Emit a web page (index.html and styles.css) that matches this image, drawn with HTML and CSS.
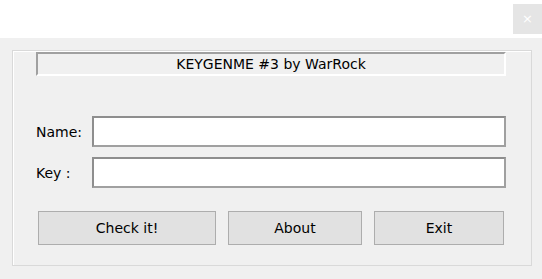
FILE: index.html
```html
<!DOCTYPE html>
<html lang="en">
<head>
    <meta charset="UTF-8">
    <title>KEYGENME #3 by WarRock</title>
    <link rel="stylesheet" href="styles.css">
</head>
<body>
    <div class="titlebar">
        <div class="close">×</div>
    </div>

    <div class="window">
        <div class="group">
            <div class="caption">KEYGENME #3 by WarRock</div>

            <div class="field">
                <span class="label">Name:</span>
                <input class="input" type="text">
            </div>
            <div class="field">
                <span class="label">Key :</span>
                <input class="input" type="text">
            </div>

            <div class="buttons">
                <button class="btn btn-check">Check it!</button>
                <button class="btn btn-about">About</button>
                <button class="btn btn-exit">Exit</button>
            </div>
        </div>
    </div>
</body>
</html>
```

FILE: styles.css
```css
* {
    margin: 0;
    padding: 0;
    box-sizing: border-box;
}

body {
    width: 542px;
    height: 279px;
    background: #ffffff;
    font-family: 'DejaVu Sans', 'Liberation Sans', sans-serif;
    font-size: 14px;
    color: #000;
    overflow: hidden;
}

.titlebar {
    height: 38px;
    display: flex;
    justify-content: flex-end;
    padding-top: 4px;
}

.close {
    width: 29px;
    height: 30px;
    background: #e5e5e5;
    color: #ffffff;
    font-size: 13px;
    line-height: 30px;
    text-align: center;
}

.window {
    height: 241px;
    background: #f0f0f0;
    padding: 12px 10px 0 12px;
}

.group {
    width: 520px;
    height: 216px;
    border: 1px solid #d9d9d9;
    box-shadow: inset 1px 1px 0 #ffffff;
    padding: 1px 0 0 23px;
}

.caption {
    width: 470px;
    height: 24px;
    border-top: 2px solid #a0a0a0;
    border-left: 2px solid #a0a0a0;
    border-right: 2px solid #ffffff;
    border-bottom: 2px solid #ffffff;
    text-align: center;
    line-height: 20px;
    margin-bottom: 40px;
}

.field {
    display: flex;
    align-items: center;
    margin-bottom: 10px;
}

.label {
    width: 56px;
}

.input {
    width: 414px;
    height: 31px;
    background: #ffffff;
    border: 2px solid #a0a0a0;
    border-top-color: #8e8e8e;
    border-left-color: #8e8e8e;
    outline: none;
}

.buttons {
    display: flex;
    gap: 12px;
    margin-top: 23px;
    padding-left: 2px;
}

.btn {
    height: 34px;
    background: #e1e1e1;
    border: 1px solid #adadad;
    font-family: inherit;
    font-size: 14px;
    color: #000;
}

.btn-check {
    width: 178px;
}

.btn-about {
    width: 134px;
}

.btn-exit {
    width: 130px;
}
```
